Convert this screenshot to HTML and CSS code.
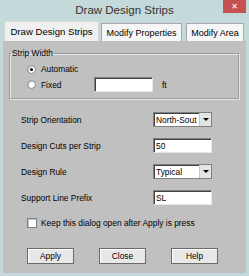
FILE: index.html
```html
<!DOCTYPE html>
<html>
<head>
<meta charset="utf-8">
<link rel="stylesheet" href="styles.css">
</head>
<body>
<div class="window">
  <div class="titlebar">
    <span class="title">Draw Design Strips</span>
    <span class="close">&#x2715;</span>
  </div>
  <div class="tabs">
    <div class="tab active">Draw Design Strips</div>
    <div class="tab props">Modify Properties</div>
    <div class="tab area">Modify Area</div>
  </div>
  <div class="content">
    <fieldset class="group">
      <legend>Strip Width</legend>
      <div class="radio-row r1">
        <span class="radio checked"></span><span class="rlabel">Automatic</span>
      </div>
      <div class="radio-row r2">
        <span class="radio"></span><span class="rlabel fixed">Fixed</span>
        <span class="input small"></span><span class="unit">ft</span>
      </div>
    </fieldset>
    <div class="fields">
      <div class="row"><span class="label">Strip Orientation</span><span class="select"><span class="val">North-Sout</span><span class="arrow"></span></span></div>
      <div class="row"><span class="label">Design Cuts per Strip</span><span class="input">50</span></div>
      <div class="row"><span class="label">Design Rule</span><span class="select"><span class="val">Typical</span><span class="arrow"></span></span></div>
      <div class="row"><span class="label">Support Line Prefix</span><span class="input">SL</span></div>
    </div>
    <div class="check-row"><span class="checkbox"></span><span class="clabel">Keep this dialog open after Apply is press</span></div>
    <div class="buttons">
      <span class="btn">Apply</span>
      <span class="btn">Close</span>
      <span class="btn">Help</span>
    </div>
  </div>
</div>
</body>
</html>
```
FILE: styles.css
```css
* { box-sizing: border-box; }
html, body { margin: 0; padding: 0; }
body { background: #c4d9d9; font-family: "Liberation Sans", Arial, sans-serif; font-size: 8.4px; color: #000; }
.window { width: 249px; height: 276px; background: #c4d9d9; display: flex; flex-direction: column; }
.titlebar { height: 21px; position: relative; display: flex; justify-content: center; align-items: center; }
.title { font-size: 11.5px; color: #333; margin-top: -1px; }
.close { position: absolute; top: 0; right: 3px; width: 23px; height: 13px; background: #c75050; color: #fff; font-family: "DejaVu Sans", sans-serif; font-size: 8px; font-weight: bold; display: flex; align-items: center; justify-content: center; }
.tabs { height: 20px; margin: 0 3px; display: flex; align-items: flex-end; font-size: 9.6px; white-space: nowrap; }
.tab { height: 18px; background: #f6f6f6; border: 1px solid #a8a8a8; border-bottom: none; display: flex; align-items: center; justify-content: center; }
.tab.active { width: 95px; height: 20px; background: #f0f0f0; border-color: #d8d8d8; margin-left: 1px; }
.tab.props { width: 81px; margin-left: 2px; font-size: 9px; }
.tab.area { width: 58px; margin-left: 4px; font-size: 9px; }
.content { flex: 1; margin: 0 3px 3px; background: #c0c0c0; padding: 7px 7px 0 6px; display: flex; flex-direction: column; }
.group { margin: 0; padding: 0; height: 51px; border: 1px solid #9c9c9c; box-shadow: inset 1px 1px 0 #e6e6e6, 1px 1px 0 #e6e6e6; }
.group legend { padding: 0 1px; margin-left: 1px; line-height: 10px; }
.radio-row { display: flex; align-items: center; }
.r1 { height: 12px; margin-top: 5px; padding-left: 17px; }
.r2 { height: 15px; margin-top: 2px; padding-left: 17px; }
.radio { width: 9px; height: 9px; border-radius: 50%; background: #fff; border: 1px solid #8a8a8a; box-shadow: inset 1px 1px 0 #d0d0d0; display: flex; align-items: center; justify-content: center; }
.radio.checked::after { content: ""; width: 3px; height: 3px; border-radius: 50%; background: #000; }
.rlabel { margin-left: 5px; }
.fixed { width: 53px; }
.input { width: 59px; height: 15px; background: #fff; border-top: 1px solid #808080; border-left: 1px solid #808080; border-right: 1px solid #e8e8e8; border-bottom: 1px solid #e8e8e8; box-shadow: inset 1px 1px 0 #404040; padding-left: 2px; display: flex; align-items: center; }
.unit { margin-left: 9px; }
.fields { margin-top: 13px; padding-left: 12px; display: flex; flex-direction: column; gap: 11px; }
.row { height: 15px; display: flex; align-items: center; }
.label { width: 132px; }
.select { width: 59px; height: 15px; background: #fff; border: 1px solid #808080; box-shadow: inset 1px 1px 0 #404040; display: flex; align-items: center; padding-left: 2px; overflow: hidden; }
.val { flex: 1; overflow: hidden; white-space: nowrap; }
.arrow { width: 12px; height: 13px; background: #e4e4e4; border-left: 1px solid #c8c8c8; display: flex; align-items: center; justify-content: center; }
.arrow::after { content: ""; border-left: 3px solid transparent; border-right: 3px solid transparent; border-top: 3px solid #000; }
.check-row { margin-top: 13px; padding-left: 18px; display: flex; align-items: center; height: 10px; }
.checkbox { width: 10px; height: 10px; background: #fff; border: 1px solid #808080; box-shadow: inset 1px 1px 0 #c8c8c8; }
.clabel { margin-left: 4px; white-space: nowrap; }
.buttons { margin-top: 20px; padding-left: 18px; display: flex; gap: 25px; }
.btn { width: 47px; height: 16px; background: #e8e8e8; border: 1px solid #6a6a6a; box-shadow: inset 1px 1px 0 #fff; display: flex; align-items: center; justify-content: center; }
```
